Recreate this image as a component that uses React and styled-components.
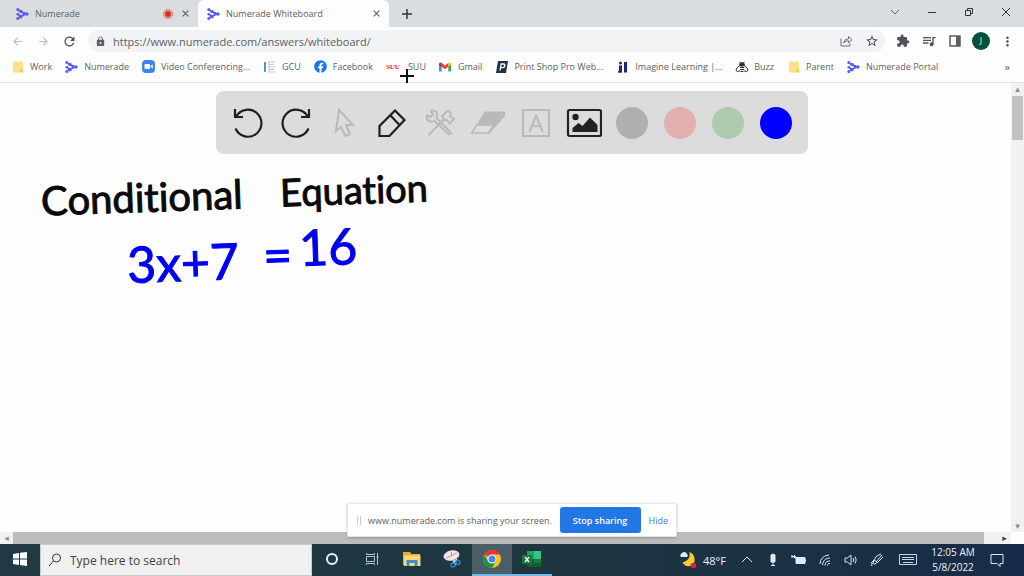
import React, { useState } from 'react'
import styled, { createGlobalStyle } from 'styled-components'
import {
  MdArrowBack,
  MdArrowForward,
  MdClose,
  MdExtension,
  MdLock,
  MdMoreVert,
  MdQueueMusic,
  MdRefresh,
  MdStarBorder,
} from 'react-icons/md'
import { FaFacebook } from 'react-icons/fa'

const inks = [
  { name: 'Black', color: '#b0b0b0' },
  { name: 'Red', color: '#e3afaf' },
  { name: 'Green', color: '#b0cab0' },
  { name: 'Blue', color: '#0000ff' },
]

function NumeradeIcon() {
  return (
    <svg width="13" height="12" viewBox="0 0 13 12" fill="none" stroke="#5b5bea">
      <path d="M2.500 2.500L10 6L2.500 9.500M2 6.200L5 8.500" strokeWidth="1.600" />
      <g fill="#5b5bea" stroke="none">
        <circle cx="1.8" cy="1.6" r="1.5" />
        <circle cx="1.8" cy="6.2" r="1.300" />
        <circle cx="1.8" cy="10.4" r="1.500" />
        <circle cx="5" cy="3.4" r="1.700" />
        <circle cx="5" cy="8.800" r="1.700" />
        <circle cx="11" cy="6" r="1.700" />
        <circle cx="8" cy="5.300" r="1.600" />
      </g>
    </svg>
  )
}

function FolderIcon() {
  return (
    <svg width="12" height="12" viewBox="0 0 12 12">
      <path d="M1 .5h9a1 1 0 0 1 1 1v10H1z" fill="#fbe28a" />
      <path d="M8 8h3v3.5H8z" fill="#f3cf62" />
    </svg>
  )
}

function ZoomIcon() {
  return (
    <svg width="13" height="13" viewBox="0 0 13 13">
      <rect width="13" height="13" rx="4" fill="#3f82f0" />
      <rect x="2.5" y="4" width="5.5" height="5" rx="1" fill="#fff" />
      <path d="M8.5 6l2.3-1.6v4.2L8.5 7z" fill="#fff" />
    </svg>
  )
}

function GcuIcon() {
  return (
    <svg width="13" height="12" viewBox="0 0 13 12">
      <path d="M1 1h2v10H1z" fill="#5d93c4" />
      <path d="M5 1h7M6 3.5h5M5 6h7M6 8.500h5M5 11h7M6 1v10" stroke="#c6cacd" fill="none" />
    </svg>
  )
}

function GmailIcon() {
  return (
    <svg width="12" height="10" viewBox="0 0 12 10">
      <path d="M0 1.500L2.700 3.500V9.500H.8Q0 9.500 0 8.700z" fill="#4285f4" />
      <path d="M12 1.500L9.300 3.500V9.500h1.900q.8 0 .8-.8z" fill="#34a853" />
      <path d="M2.700 1L6 3.600L9.300 1V4.700L6 7.200L2.700 4.700z" fill="#ea4335" />
      <path d="M0 1.500Q.8-.2 2.700 1V4.700L0 2.800z" fill="#c5221f" />
      <path d="M12 1.500Q11.200-.2 9.300 1V4.700L12 2.800z" fill="#fbbc04" />
    </svg>
  )
}

function PrintShopIcon() {
  return (
    <svg width="12" height="12" viewBox="0 0 12 12">
      <path d="M2 0h10l-2 12H0z" fill="#203246" />
      <path d="M4 9.500L5.200 3h2.500q1.500.2 1 2T6.500 6.700H4.800" fill="none" stroke="#fff" strokeWidth="1.300" />
    </svg>
  )
}

function ImagineIcon() {
  return (
    <svg width="12" height="12" viewBox="0 0 12 12" fill="#26207a">
      <circle cx="3.500" cy="2" r="1.500" />
      <rect x="2" y="4.500" width="3" height="7" />
      <rect x="7" y="1" width="3" height="10.500" />
      <path d="M1 10h4v1.500H1z" />
    </svg>
  )
}

function BeeIcon() {
  return (
    <svg width="14" height="12" viewBox="0 0 14 12" fill="none" stroke="#333">
      <path d="M5 4.500Q.5 7 1 9.500Q2 11.500 5 9.800M9 4.500Q13.500 7 13 9.500Q12 11.500 9 9.800M4.500 .8l1.500 1.500M9.500 .8L8 2.300" />
      <ellipse cx="7" cy="3.500" rx="2.500" ry="1.700" fill="#333" />
      <path d="M5 6.500h4M5 8.500h4M5.500 10.500h3" strokeWidth="1.200" />
    </svg>
  )
}

function ShareIcon() {
  return (
    <svg width="13" height="12" viewBox="0 0 13 12" fill="none" stroke="#6b6e72">
      <path d="M1 3.500V11h9V8.500" />
      <path d="M3.500 8Q4 4 8.500 3.800V1.500L12 4.700L8.500 7.800V5.800Q5.500 5.600 3.500 8z" />
    </svg>
  )
}

function PanelIcon() {
  return (
    <svg width="12" height="12" viewBox="0 0 12 12">
      <rect x="1" y="1" width="10" height="10" fill="none" stroke="#5b5e62" strokeWidth="1.500" />
      <rect x="7" y="1" width="4" height="10" fill="#5b5e62" />
    </svg>
  )
}

function UndoIcon() {
  return (
    <svg width="32" height="32" viewBox="0 0 32 32" fill="none" stroke="#1f1f1f" strokeWidth="2.200">
      <path d="M3.500 21.500A13.500 13.500 0 1 0 4.500 9M3 2v8h8" />
    </svg>
  )
}

function RedoIcon() {
  return (
    <svg width="32" height="32" viewBox="0 0 32 32" fill="none" stroke="#1f1f1f" strokeWidth="2.200">
      <path d="M28.500 21.500A13.500 13.500 0 1 1 27.500 9M29 2v8h-8" />
    </svg>
  )
}

function PointerIcon() {
  return (
    <svg width="32" height="32" viewBox="0 0 32 32" fill="none" stroke="#b9b9b9" strokeWidth="2">
      <path d="M11 3L8 24L13 20L17.500 29L22 27L18 18H25z" />
    </svg>
  )
}

function PencilIcon() {
  return (
    <svg width="32" height="32" viewBox="0 0 32 32" fill="none" stroke="#1f1f1f" strokeWidth="2.200">
      <path d="M19 3.500L28.500 13L13.500 29H3.500V19z" />
      <path d="M14.500 8.500L23.500 18" />
    </svg>
  )
}

function ToolsIcon() {
  return (
    <svg width="32" height="32" viewBox="0 0 32 32" fill="none" stroke="#b9b9b9" strokeWidth="2">
      <path d="M2.500 8Q2 13.500 6.500 14.500Q9 15 10.500 14L25.500 28M6.500 4Q11.500 2.500 13 6.500Q13.500 9.500 12.500 11L28 27M6.500 4L9 7.500L6.500 10L2.500 8" />
      <path d="M4.500 28L20 12.500M18 9L24 3.500L27 6.500L26 9L30 12L25.500 16.500L22.500 12.500L20 13z" />
    </svg>
  )
}

function EraserIcon() {
  return (
    <svg width="36" height="32" viewBox="0 0 36 32">
      <path d="M15 5H35L24 18H7z" fill="#b9b9b9" stroke="#b9b9b9" />
      <path d="M7 18H23.500L18.500 26H1.500z" fill="#dedede" stroke="#b9b9b9" strokeWidth="1.500" />
      <path d="M24 18L35 5V9L19 27V24z" fill="#b9b9b9" />
    </svg>
  )
}

function PictureIcon() {
  return (
    <svg width="36" height="32" viewBox="0 0 36 32">
      <rect x="2" y="3" width="33" height="26" rx="1.500" fill="none" stroke="#202323" strokeWidth="2.200" />
      <circle cx="9.500" cy="10" r="3.200" fill="#202323" />
      <path d="M6.500 25V21L12.500 16L16.500 19L24 10.500L31.500 18V25z" fill="#202323" />
    </svg>
  )
}

function ChromeIcon() {
  return (
    <svg width="18" height="18" viewBox="0 0 18 18">
      <circle cx="9" cy="9" r="9" fill="#fbc116" />
      <path d="M9 9L1.200 4.500A9 9 0 0 1 16.800 4.500H9z" fill="#e33b2e" />
      <path d="M1.200 4.500A9 9 0 0 0 9 18L12.900 11.200L9 9L5.100 11.200z" fill="#229342" />
      <circle cx="9" cy="9" r="4.500" fill="#fff" />
      <circle cx="9" cy="9" r="3.500" fill="#4285f4" />
    </svg>
  )
}

function ExplorerIcon() {
  return (
    <svg width="18" height="16" viewBox="0 0 18 16">
      <path d="M0 1h7l1.500 2H17v11H0z" fill="#e9ae35" />
      <path d="M1 4.500h16.500V15H1z" fill="#fbd977" />
      <path d="M3.500 15V9h11v6h-3v-3h-5v3z" fill="#3b8fd0" />
    </svg>
  )
}

function SnipIcon() {
  return (
    <svg width="18" height="18" viewBox="0 0 18 18">
      <ellipse cx="8.500" cy="5.500" rx="8" ry="5" fill="#ece6e9" transform="rotate(-12 8.500 5.500)" />
      <path d="M3 8L14 3M8.500 2v4" stroke="#d0727e" strokeWidth=".8" fill="none" />
      <path d="M9 8L13 15M14 9L10 13" stroke="#ddd" strokeWidth="1.500" />
      <g fill="none" stroke="#2f83c6" strokeWidth="1.500">
        <circle cx="10" cy="15" r="2" />
        <circle cx="15" cy="12.500" r="2" />
      </g>
    </svg>
  )
}

function ExcelIcon() {
  return (
    <svg width="20" height="17" viewBox="0 0 20 17">
      <path d="M5 0h14v16H5z" fill="#21a366" />
      <path d="M12 0h7v8h-7z" fill="#33c481" />
      <path d="M5 8h14v8H5z" fill="#185c37" />
      <path d="M12 8h7v4h-7z" fill="#107c41" />
      <rect y="4" width="10" height="9" fill="#107c41" />
      <path d="M3 6l4 5M7 6l-4 5" stroke="#fff" strokeWidth="1.400" />
    </svg>
  )
}

function WeatherIcon() {
  return (
    <svg width="18" height="18" viewBox="0 0 18 18">
      <path d="M10.500 1Q12 9 3.500 11.500Q6 16 11 15Q16.500 13 15.500 7Q14.500 2.500 10.500 1z" fill="#f8ca2c" />
      <path d="M2 6a2.500 2.500 0 0 1 1-4a3 3 0 0 1 5 1a2 2 0 0 1 0 3z" fill="#dbe9f3" />
      <circle cx="14.500" cy="14.500" r="2.700" fill="#d6243b" />
    </svg>
  )
}

const trayIcons = [
  { label: 'Show hidden icons', d: 'M4 11L9 6L14 11' },
  { label: 'Microphone', d: 'M7 4q2-2 4 0v7H7zM9 11v4M7 14.500h4', fill: true },
  { label: 'Battery', d: 'M6 6.500h9v6H6zM15.500 8.500v2M1.500 5.500h4v2M2 4v3M4.500 4v3', fill: true },
  { label: 'Network', d: 'M4 13A9 9 0 0 1 13 4M6.500 14A7 7 0 0 1 14 7M9 14.500A4.500 4.500 0 0 1 14 10M11.500 14.500A2 2 0 0 1 14 12.500' },
  { label: 'Volume', d: 'M3 7h2.500L9 4v10L5.500 11H3zM11 7q1.500 2 0 4M13 5.500q2.500 3.500 0 7' },
  { label: 'Pen', d: 'M3 12q3-4 5-2t-1 3t-1-4t7-6M8 11L14 4M9 12L15 6M4 15q-2-2 1-3' },
]

function TrayIcon({ d, fill }) {
  return (
    <svg width="18" height="18" viewBox="0 0 18 18" fill={fill ? '#e2e8ec' : 'none'} stroke="#e2e8ec">
      <path d={d} />
    </svg>
  )
}

const bookmarks = [
  { name: 'Work', icon: <FolderIcon /> },
  { name: 'Numerade', icon: <NumeradeIcon /> },
  { name: 'Video Conferencing...', icon: <ZoomIcon /> },
  { name: 'GCU', icon: <GcuIcon /> },
  { name: 'Facebook', icon: <FaFacebook size={13} color="#1877f2" /> },
  { name: 'SUU', mark: 'SUU' },
  { name: 'Gmail', icon: <GmailIcon /> },
  { name: 'Print Shop Pro Web...', icon: <PrintShopIcon /> },
  { name: 'Imagine Learning |...', icon: <ImagineIcon /> },
  { name: 'Buzz', icon: <BeeIcon /> },
  { name: 'Parent', icon: <FolderIcon /> },
  { name: 'Numerade Portal', icon: <NumeradeIcon /> },
]

function App() {
  const [ink, setInk] = useState('Blue')
  const [url, setUrl] = useState('https://www.numerade.com/answers/whiteboard/')
  const [search, setSearch] = useState('')

  return (
    <Desktop>
      <GlobalStyle />
      <TabStrip>
        <Tab>
          <NumeradeIcon />
          <TabTitle>Numerade</TabTitle>
          <Recording />
          <IconButton $w={16} aria-label="Close tab"><MdClose size={11} /></IconButton>
        </Tab>
        <Tab $active>
          <NumeradeIcon />
          <TabTitle>Numerade Whiteboard</TabTitle>
          <IconButton $w={16} aria-label="Close tab"><MdClose size={11} /></IconButton>
        </Tab>
        <IconButton $w={36} aria-label="New tab">
          <svg width="12" height="12" viewBox="0 0 12 12" stroke="#333" strokeWidth="1.500"><path d="M6 1v10M1 6h10" /></svg>
        </IconButton>
        <WindowButtons>
          <IconButton $w={37} aria-label="Search tabs">
            <svg width="10" height="10" viewBox="0 0 10 10" fill="none" stroke="#666"><path d="M1 3l4 4l4-4" /></svg>
          </IconButton>
          <IconButton $w={37} aria-label="Minimize">
            <svg width="10" height="10" viewBox="0 0 10 10" stroke="#333"><path d="M1 5.500h8" /></svg>
          </IconButton>
          <IconButton $w={37} aria-label="Restore">
            <svg width="10" height="10" viewBox="0 0 10 10" fill="none" stroke="#333"><path d="M1.500 3.500h5v5h-5zM3.500 3V1.500h5v5H7" /></svg>
          </IconButton>
          <IconButton $w={37} aria-label="Close">
            <svg width="10" height="10" viewBox="0 0 10 10" stroke="#333"><path d="M1 1l8 8M9 1L1 9" /></svg>
          </IconButton>
        </WindowButtons>
      </TabStrip>

      <AddressRow>
        <IconButton $w={26} $faded aria-label="Back"><MdArrowBack size={13} /></IconButton>
        <IconButton $w={26} $faded aria-label="Forward"><MdArrowForward size={13} /></IconButton>
        <IconButton $w={26} aria-label="Reload"><MdRefresh size={15} /></IconButton>
        <Omnibox>
          <MdLock size={11} />
          <UrlInput aria-label="Address" value={url} onChange={(e) => setUrl(e.target.value)} />
          <IconButton $w={26} aria-label="Share"><ShareIcon /></IconButton>
          <IconButton $w={26} aria-label="Bookmark this page"><MdStarBorder size={14} /></IconButton>
        </Omnibox>
        <IconButton $w={26} aria-label="Extensions"><MdExtension size={14} /></IconButton>
        <IconButton $w={26} aria-label="Media"><MdQueueMusic size={16} /></IconButton>
        <IconButton $w={26} aria-label="Side panel"><PanelIcon /></IconButton>
        <IconButton $w={26} aria-label="Profile"><Avatar>J</Avatar></IconButton>
        <IconButton $w={26} aria-label="Menu"><MdMoreVert size={15} /></IconButton>
      </AddressRow>

      <BookmarkBar>
        {bookmarks.map((b) => (
          <Bookmark href="#" key={b.name}>
            {b.mark ? <SuuMark>{b.mark}</SuuMark> : <BookmarkIcon>{b.icon}</BookmarkIcon>}
            {b.name}
          </Bookmark>
        ))}
        <MoreBookmarks aria-label="More bookmarks">»</MoreBookmarks>
      </BookmarkBar>

      <Page>
        <Board>
          <Tools>
            <Tool aria-label="Undo"><UndoIcon /></Tool>
            <Tool aria-label="Redo"><RedoIcon /></Tool>
            <Tool aria-label="Select"><PointerIcon /></Tool>
            <Tool aria-label="Pen"><PencilIcon /></Tool>
            <Tool aria-label="Shapes"><ToolsIcon /></Tool>
            <Tool aria-label="Eraser"><EraserIcon /></Tool>
            <Tool aria-label="Text"><TextTool>A</TextTool></Tool>
            <Tool aria-label="Image"><PictureIcon /></Tool>
            {inks.map((i) => (
              <Tool key={i.name} aria-label={i.name} aria-pressed={ink === i.name} onClick={() => setInk(i.name)}>
                <Swatch $color={i.color} />
              </Tool>
            ))}
          </Tools>
          <Note $x={41} $y={84} $size={40}>Conditional</Note>
          <Note $x={280} $y={76} $size={38}>Equation</Note>
          <Note $x={127} $y={149} $size={50} $color="#0000ee">3x+7</Note>
          <Note $x={263} $y={141} $size={50} $color="#0000ee">=</Note>
          <Note $x={299} $y={133} $size={50} $color="#0000ee">16</Note>
        </Board>
        <ScrollY>
          <ScrollArrow>▴</ScrollArrow>
          <ThumbY />
          <ScrollArrow>▾</ScrollArrow>
        </ScrollY>
        <ScrollX>
          <ScrollArrow>◂</ScrollArrow>
          <ThumbX />
          <ScrollArrow $dark>▸</ScrollArrow>
        </ScrollX>
      </Page>

      <Taskbar>
        <TaskButton aria-label="Start">
          <svg width="14" height="14" viewBox="0 0 14 14" fill="#fff"><path d="M0 2l6-1v5.500H0zM7 .8L14 0v6.500H7zM0 7.500h6V13l-6-1zM7 7.500h7V14l-7-.9z" /></svg>
        </TaskButton>
        <SearchBox>
          <svg width="14" height="14" viewBox="0 0 14 14" fill="none" stroke="#333"><circle cx="8.500" cy="5" r="4" /><path d="M5.500 8L1 13" /></svg>
          <SearchInput aria-label="Search" placeholder="Type here to search" value={search} onChange={(e) => setSearch(e.target.value)} />
        </SearchBox>
        <TaskButton aria-label="Cortana">
          <svg width="14" height="14" viewBox="0 0 14 14" fill="none" stroke="#e6f3f7" strokeWidth="2"><circle cx="7" cy="7" r="5" /></svg>
        </TaskButton>
        <TaskButton aria-label="Task view">
          <svg width="14" height="14" viewBox="0 0 14 14" fill="none" stroke="#b5c3c8"><path d="M1.500 4.500h8v5h-8zM1.500 1v1.500h8V1M1.500 13v-1.500h8V13M12.500 1v12M11.500 5h2" /></svg>
        </TaskButton>
        <TaskButton aria-label="File Explorer"><ExplorerIcon /></TaskButton>
        <TaskButton aria-label="Snipping Tool"><SnipIcon /></TaskButton>
        <TaskButton $open $active aria-label="Chrome"><ChromeIcon /></TaskButton>
        <TaskButton $open aria-label="Excel"><ExcelIcon /></TaskButton>
        <Tray>
          <Weather><WeatherIcon />48°F</Weather>
          {trayIcons.map((t) => (
            <IconButton $w={26} key={t.label} aria-label={t.label}><TrayIcon d={t.d} fill={t.fill} /></IconButton>
          ))}
          <IconButton $w={36} aria-label="Touch keyboard">
            <svg width="18" height="12" viewBox="0 0 18 12" fill="none" stroke="#cbd4df"><path d="M.5.5h17v10H.5zM3 3.500h12M3 5.500h12M4 8.500h10" /></svg>
          </IconButton>
          <Clock><span>12:05 AM</span><span>5/8/2022</span></Clock>
          <IconButton $w={34} aria-label="Notifications">
            <svg width="14" height="14" viewBox="0 0 14 14" fill="none" stroke="#e2e8ec"><path d="M1 1.500h12v9H10v3L7 10.500H1z" /></svg>
          </IconButton>
        </Tray>
      </Taskbar>

      <ShareNotice>
        <Grip />
        <span>www.numerade.com is sharing your screen.</span>
        <StopButton>Stop sharing</StopButton>
        <HideButton>Hide</HideButton>
      </ShareNotice>
      <Cursor width="16" height="16" viewBox="0 0 16 16" stroke="#111" strokeWidth="2">
        <path d="M8 1v14M1 8h14" />
      </Cursor>
    </Desktop>
  )
}
export default App


const GlobalStyle = createGlobalStyle`
* {
  box-sizing: border-box;
}
body {
  margin: 0;
  overflow: hidden;
}
button, input {
  font: inherit;
  color: inherit;
  border: 0;
  padding: 0;
  background: none;
}
svg {
  flex-shrink: 0;
}
`

const Desktop = styled.div`
position: relative;
display: flex;
flex-direction: column;
height: 100vh;
background: #fdfdfd;
color: #5c5f63;
font-family: "Open Sans", "Noto Sans", sans-serif;
font-size: 9px;
`

const IconButton = styled.button`
display: flex;
align-items: center;
justify-content: center;
flex: none;
width: ${(props) => props.$w}px;
color: ${(props) => (props.$faded ? '#b9bbbe' : '#505357')};
`

const TabStrip = styled.div`
display: flex;
height: 27px;
background: #dadde0;
`

const Tab = styled.div`
display: flex;
align-items: center;
gap: 6px;
width: ${(props) => (props.$active ? 191 : 198)}px;
padding: 0 5px 0 ${(props) => (props.$active ? 9 : 16)}px;
border-radius: 6px 6px 0 0;
background: ${(props) => (props.$active ? '#fdfdfd' : 'transparent')};
`

const TabTitle = styled.span`
flex: 1;
`

const Recording = styled.span`
width: 10px;
height: 10px;
margin-right: -2px;
border: 1px solid #e08a85;
border-radius: 50%;
background: #d93025;
box-shadow: inset 0 0 0 1px #eab9b5;
`

const WindowButtons = styled.div`
display: flex;
margin-left: auto;
padding-bottom: 4px;
`

const AddressRow = styled.div`
display: flex;
align-items: center;
height: 28px;
padding: 0 4px;
`

const Omnibox = styled.div`
display: flex;
align-items: center;
flex: 1;
height: 22px;
margin: 0 5px 0 6px;
padding-left: 7px;
border-radius: 11px;
background: #f1f3f4;
`

const UrlInput = styled.input`
flex: 1;
margin-left: 7px;
font-size: 11px;
outline: none;
`

const Avatar = styled.span`
width: 18px;
height: 18px;
border-radius: 50%;
background: #04503c;
color: #dfe9e5;
font-size: 9px;
line-height: 18px;
text-align: center;
`

const BookmarkBar = styled.nav`
display: flex;
align-items: center;
gap: 13px;
height: 28px;
padding: 0 14px 4px 11px;
border-bottom: 1px solid #e2e3e5;
`

const Bookmark = styled.a`
display: flex;
align-items: center;
gap: 6px;
color: inherit;
text-decoration: none;
white-space: nowrap;
`

const BookmarkIcon = styled.span`
display: flex;
justify-content: center;
width: 13px;
`

const SuuMark = styled.span`
width: 16px;
color: #d5232f;
font-family: "Liberation Serif", serif;
font-size: 7px;
font-weight: bold;
`

const MoreBookmarks = styled.button`
margin-left: auto;
font-size: 11px;
`

const Page = styled.main`
display: grid;
grid-template-columns: 1fr 13px;
grid-template-rows: 1fr 12px;
flex: 1;
min-height: 0;
`

const Board = styled.section`
position: relative;
padding: 8px 0 0 13px;
overflow: hidden;
`

const Tools = styled.div`
display: flex;
width: max-content;
margin: 0 auto;
padding: 0 8px;
border-radius: 8px;
background: #dcdcdc;
`

const Tool = styled.button`
display: flex;
align-items: center;
justify-content: center;
width: 48px;
height: 63px;
`

const TextTool = styled.span`
width: 28px;
height: 28px;
border: 2px solid #b9b9b9;
color: #b9b9b9;
font-size: 24px;
font-weight: 500;
line-height: 24px;
text-align: center;
`

const Swatch = styled.span`
width: 32px;
height: 32px;
border-radius: 50%;
background: ${(props) => props.$color};
`

// notes sit wherever they were written on the board
const Note = styled.div`
position: absolute;
left: ${(props) => props.$x}px;
top: ${(props) => props.$y}px;
color: ${(props) => props.$color || '#0a0a0a'};
font-family: Lato, sans-serif;
font-size: ${(props) => props.$size}px;
font-variant-ligatures: none;
line-height: 60px;
transform: rotate(-2deg);
-webkit-text-stroke: 1px currentColor;
`

const ScrollY = styled.div`
display: flex;
flex-direction: column;
background: #f1f1f1;
`

const ScrollX = styled.div`
display: flex;
background: #f1f1f1;
`

const ScrollArrow = styled.span`
width: 13px;
height: 12px;
color: ${(props) => (props.$dark ? '#444' : '#8b8b8b')};
font-family: "DejaVu Sans", sans-serif;
font-size: 9px;
line-height: 12px;
text-align: center;
`

const ThumbY = styled.div`
height: 44px;
margin: 1px 1px auto;
background: #c1c1c1;
`

const ThumbX = styled.div`
width: 96%;
margin-right: auto;
background: #bdbdbd;
`

const Taskbar = styled.footer`
display: flex;
height: 32px;
background: linear-gradient(90deg, #203942, #1f3640 55%, #182b49);
`

const TaskButton = styled.button`
display: flex;
align-items: center;
justify-content: center;
width: 40px;
background: ${(props) => (props.$active ? '#4b5e67' : 'transparent')};
border-bottom: 2px solid ${(props) => (props.$open ? '#76b9ed' : 'transparent')};
`

const SearchBox = styled.label`
display: flex;
align-items: center;
gap: 8px;
width: 272px;
padding-left: 7px;
background: #f0f0f0;
border: 1px solid #c9cccd;
`

const SearchInput = styled.input`
flex: 1;
font-size: 12px;
outline: none;
&::placeholder {
  color: #444;
  opacity: 1;
}
`

const Tray = styled.div`
display: flex;
align-items: center;
margin-left: auto;
padding-right: 10px;
color: #eef2f5;
`

const Weather = styled.div`
display: flex;
align-items: center;
gap: 6px;
margin-right: 8px;
font-size: 11px;
`

const Clock = styled.div`
display: flex;
flex-direction: column;
align-items: center;
width: 54px;
font-size: 10px;
line-height: 15px;
`

const ShareNotice = styled.div`
position: absolute;
left: 50%;
bottom: 39px;
transform: translateX(-50%);
display: flex;
align-items: center;
width: 330px;
height: 34px;
padding: 0 8px;
background: #fff;
border: 1px solid #e4e4e4;
box-shadow: 0 1px 3px rgba(0, 0, 0, 0.2);
white-space: nowrap;
`

const Grip = styled.span`
width: 4px;
height: 9px;
margin: 0 7px 0 1px;
border: solid #ccc;
border-width: 0 1px;
`

const StopButton = styled.button`
width: 81px;
height: 26px;
margin: 0 8px 0 auto;
border-radius: 3px;
background: #2376e5;
color: #fff;
font-weight: 600;
`

const HideButton = styled.button`
color: #3b7de0;
`

const Cursor = styled.svg`
position: absolute;
left: 399px;
top: 68px;
`
